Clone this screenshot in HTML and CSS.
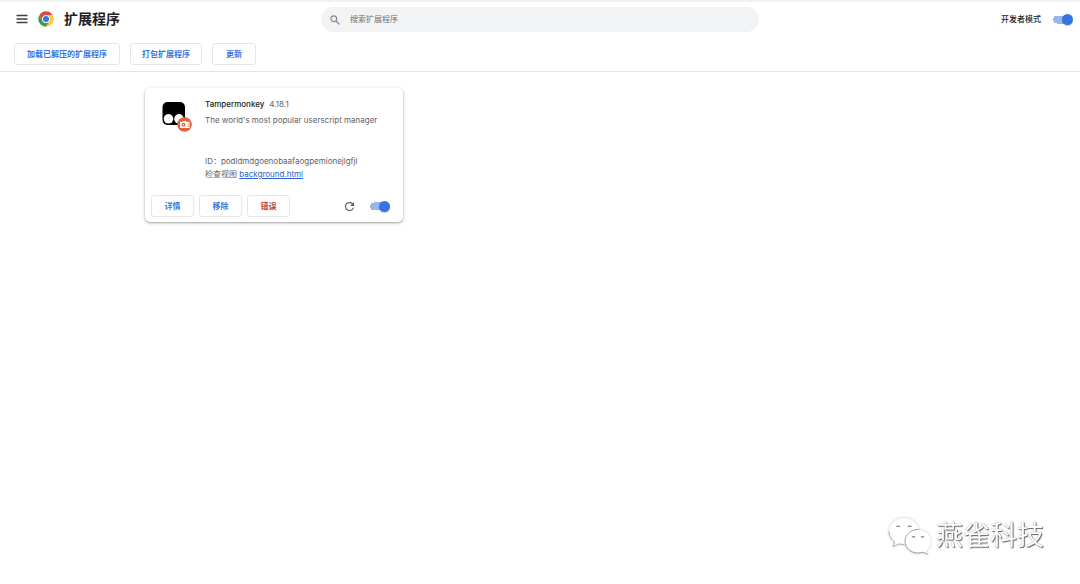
FILE: index.html
```html
<!DOCTYPE html>
<html lang="zh-CN">
<head>
<meta charset="utf-8">
<meta name="viewport" content="width=device-width, initial-scale=1">
<title>扩展程序</title>
<link rel="stylesheet" href="styles.css">
</head>
<body>
<header class="toolbar">
  <div class="toolbar-main">
    <div class="brand">
      <button class="icon-button" type="button" aria-label="主菜单">
        <svg class="menu-icon" viewBox="0 0 12 10" aria-hidden="true"><path d="M.5 1.5h11M.5 5h11M.5 8.500h11" stroke="#3c4043" stroke-width="1.500" fill="none"/></svg>
      </button>
      <svg class="chrome-logo" viewBox="0 0 48 48" aria-hidden="true">
        <path d="M4.080 12.500A23 23 0 0 1 43.920 12.500H24A11.500 11.500 0 0 0 14.040 29.750Z" fill="#dd4b3e"/>
        <path d="M43.920 12.500A23 23 0 0 1 24 47L33.960 29.750A11.500 11.500 0 0 0 24 12.500Z" fill="#fdc93b"/>
        <path d="M24 47A23 23 0 0 1 4.080 12.500L14.040 29.750A11.500 11.500 0 0 0 33.960 29.750Z" fill="#3f9a50"/>
        <circle cx="24" cy="24" r="11.500" fill="#fff"/>
        <circle cx="24" cy="24" r="9" fill="#3574e2"/>
      </svg>
      <h1 class="title">扩展程序</h1>
    </div>
    <label class="search">
      <svg class="search-icon" viewBox="0 0 10 10" aria-hidden="true"><circle cx="3.800" cy="3.800" r="2.900" fill="none" stroke="#80868b" stroke-width="1.200"/><path d="M6 6l3.400 3.400" stroke="#80868b" stroke-width="1.300"/></svg>
      <input class="search-input" type="search" placeholder="搜索扩展程序" aria-label="搜索扩展程序">
    </label>
    <label class="dev-mode">
      <span>开发者模式</span>
      <input class="toggle" type="checkbox" role="switch" checked>
    </label>
  </div>
  <div class="dev-actions">
    <button class="button button-long" type="button">加载已解压的扩展程序</button>
    <button class="button button-wide" type="button">打包扩展程序</button>
    <button class="button button-wide" type="button">更新</button>
  </div>
</header>

<main class="extensions">
  <article class="card">
    <div class="card-body">
      <svg class="extension-icon" viewBox="0 0 30 30" aria-hidden="true">
        <rect x="0.500" y="0" width="22.500" height="23" rx="5" fill="#000"/>
        <circle cx="6.500" cy="16.800" r="4.800" fill="#fff"/>
        <circle cx="17" cy="16.800" r="4.800" fill="#fff"/>
        <circle cx="22.500" cy="22.500" r="7.300" fill="#e2643a"/>
        <path d="M18 19.700h3l.6-.7h2.200l.6.700h3.200v6.200H18z" fill="#fff"/>
        <circle cx="21.500" cy="22.700" r="2" fill="#e2643a"/>
        <circle cx="21.500" cy="22.700" r=".7" fill="#fff"/>
        <path d="M25 21h1.500v3.500h-1.500" fill="none" stroke="#e9977a" stroke-width=".6"/>
      </svg>
      <div class="details">
        <div class="name-row"><h2 class="name">Tampermonkey</h2><span>4.18.1</span></div>
        <p class="description">The world's most popular userscript manager</p>
        <p class="meta">ID：podldmdgoenobaafaogpemionejlgfjl</p>
        <p class="meta">检查视图 <a class="link" href="#background">background.html</a></p>
      </div>
    </div>
    <div class="card-actions">
      <button class="button" type="button">详情</button>
      <button class="button" type="button">移除</button>
      <button class="button button-error" type="button">错误</button>
      <div class="card-controls">
        <button class="icon-button" type="button" aria-label="重新加载">
          <svg class="reload-icon" viewBox="4 4 16 16" aria-hidden="true"><path fill="#5f6368" d="M17.650 6.350A7.960 7.960 0 0 0 12 4a8 8 0 1 0 7.730 10h-2.080A6 6 0 1 1 12 6c1.660 0 3.140.69 4.220 1.780L13 11h7V4z"/></svg>
        </button>
        <input class="toggle" type="checkbox" role="switch" aria-label="启用 Tampermonkey" checked>
      </div>
    </div>
  </article>
</main>

<div class="watermark">
  <svg class="chat-icon" viewBox="0 0 44 38" aria-hidden="true">
    <path d="M16 1C7.500 1 1 7 1 14.500c0 4.500 2.200 8 5.800 10.500L5 29.500l6-2.700c1.600.5 3.300.7 5 .7C24 27.500 31 22 31 14.500S24.500 1 16 1z" fill="#fff"/>
    <path d="M1 14.500c0 4.500 2.200 8 5.800 10.500L5 29.500l6-2.700c1.600.5 3.300.7 5 .7" fill="none" stroke="#aaa" stroke-width=".8"/>
    <path d="M30 12.500c-7.500 0-13 5.200-13 11.700S22.500 36 30 36c1.700 0 3.300-.3 4.800-.8l5 2-1.500-3.500c3-2.200 4.700-5.500 4.700-9.500 0-6.500-5.500-11.700-13-11.700z" fill="#fff"/>
    <path d="M31 12.500c-8.500-.3-14 5.200-14 11.700S22.500 36 30 36c1.700 0 3.300-.3 4.800-.8l5 2" fill="none" stroke="#999" stroke-width=".9"/>
    <path d="M8.500 10a2 2 0 0 1 3.400 0M20 10a2 2 0 0 1 3.400 0M24 20.500a1.700 1.700 0 0 1 3 0M33 20.500a1.700 1.700 0 0 1 3 0" fill="none" stroke="#888" stroke-width="1.200"/>
  </svg>
  <span>燕雀科技</span>
</div>
</body>
</html>
```
FILE: styles.css
```css
* {
  box-sizing: border-box;
}

body {
  margin: 0;
  min-height: 100vh;
  background: #fff;
  color: #5f6368;
  font: 8px/13px Inter, "Noto Sans CJK SC", sans-serif;
}

h1,
h2,
p {
  margin: 0;
}

button,
input {
  font: inherit;
}

.toolbar {
  border-top: 2px solid #f1f2f2;
  border-bottom: 1px solid #e3e4e5;
}

.toolbar-main {
  display: grid;
  grid-template-columns: 1fr minmax(0, 438px) 1fr;
  align-items: center;
  height: 35px;
}

.brand {
  display: flex;
  align-items: center;
  padding: 0 0 1px 16px;
}

.icon-button {
  display: flex;
  padding: 0;
  border: 0;
  background: none;
}

.menu-icon {
  width: 12px;
  height: 10px;
}

.chrome-logo {
  width: 16px;
  height: 16px;
  margin-left: 10px;
}

.title {
  margin-left: 10px;
  color: #202124;
  font-size: 14px;
  font-weight: 600;
  line-height: 20px;
}

.search {
  display: flex;
  align-items: center;
  gap: 10px;
  height: 25px;
  padding: 0 9px;
  border-radius: 13px;
  background: #f1f3f4;
}

.search-icon {
  width: 10px;
  height: 10px;
}

.search-input {
  flex: 1;
  min-width: 0;
  padding: 0;
  border: 0;
  outline: 0;
  background: none;
  color: #202124;
}

.search-input::placeholder {
  color: #6f7478;
}

.dev-mode {
  display: flex;
  justify-content: flex-end;
  align-items: center;
  gap: 12px;
  padding-right: 7px;
  color: #202124;
  font-weight: 500;
}

.toggle {
  appearance: none;
  display: flex;
  align-items: center;
  justify-content: flex-end;
  width: 20px;
  height: 11px;
  margin: 0;
  background:
    radial-gradient(circle at 4px 50%, #98b6ee 4px, transparent 4px) no-repeat,
    linear-gradient(#98b6ee, #98b6ee) 4px center / 12px 8px no-repeat;
}

.toggle::after {
  content: "";
  width: 11px;
  height: 11px;
  border-radius: 50%;
  background: #3574e2;
  box-shadow: 0 1px 1px rgba(0, 0, 0, 0.2);
}

.toggle:not(:checked) {
  justify-content: flex-start;
}

.dev-actions {
  display: flex;
  gap: 10px;
  padding: 6px 14px;
}

.button {
  min-width: 43px;
  height: 22px;
  padding: 0 8px;
  border: 1px solid #e4e6e8;
  border-radius: 3px;
  background: #fff;
  color: #3574e2;
  font-weight: 600;
  white-space: nowrap;
}

.button-wide {
  min-width: 44px;
  padding: 0 11px;
}

.button-long {
  padding: 0 12px;
}

.button-error {
  color: #b93a2c;
}

.extensions {
  display: grid;
  grid-template-columns: repeat(auto-fill, 258px);
  justify-content: center;
  gap: 8px;
  padding: 16px 140px;
}

.card {
  border-radius: 5px;
  background: #fff;
  box-shadow: 0 1px 2px rgba(60, 64, 67, 0.35), 0 1px 4px rgba(60, 64, 67, 0.2);
}

.card-body {
  display: flex;
  gap: 13px;
  min-height: 103px;
  padding: 10px 16px 0 17px;
}

.extension-icon {
  flex: none;
  width: 30px;
  height: 30px;
  margin-top: 4px;
}

.name-row {
  display: flex;
  gap: 5px;
}

.name {
  color: #202124;
  font-size: 8px;
  font-weight: 500;
}

.description {
  min-height: 41px;
  margin-top: 3px;
}

.meta {
  white-space: nowrap;
}

.link {
  color: #2864cf;
}

.card-actions {
  display: flex;
  gap: 5px;
  padding: 4px 6px 5px;
}

.card-controls {
  display: flex;
  align-items: center;
  gap: 16px;
  margin-left: auto;
  padding-right: 7px;
}

.reload-icon {
  width: 9px;
  height: 9px;
}

.watermark {
  position: fixed;
  right: 36px;
  bottom: 29px;
  display: flex;
  align-items: center;
  gap: 4px;
  color: #fff;
  font-size: 27px;
  line-height: 38px;
  text-shadow: 1px 1px 1px #666, 0 0 1px #777;
}

.chat-icon {
  width: 44px;
  height: 38px;
  filter: drop-shadow(0 0 1px #bbb);
}
```
